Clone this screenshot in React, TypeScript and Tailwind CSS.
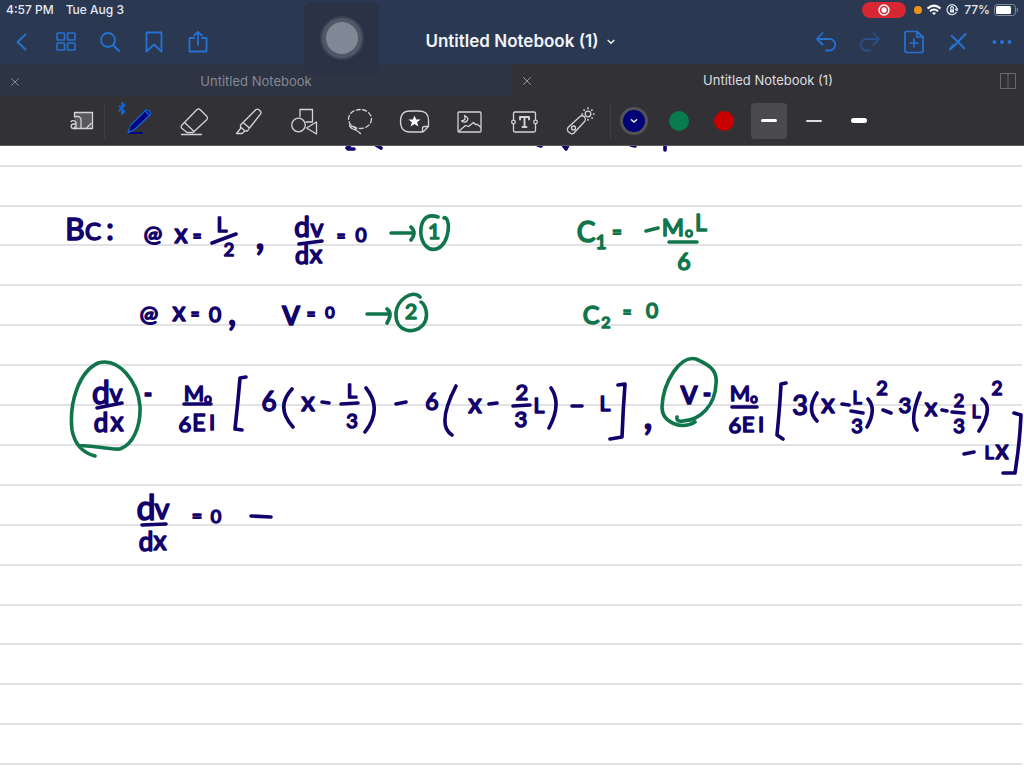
import type { ReactNode } from "react";

type IconProps = { children: ReactNode; className?: string };

function Icon({ children, className = "h-6 w-6" }: IconProps) {
  return (
    <svg
      className={className}
      viewBox="0 0 24 24"
      fill="none"
      stroke="currentColor"
      strokeWidth={1.6}
      strokeLinecap="round"
      strokeLinejoin="round"
      aria-hidden="true"
    >
      {children}
    </svg>
  );
}

const leftActions = [
  { label: "Back", icon: <path d="M15.5 4.5 7.5 12l8 7.5" strokeWidth={1.9} /> },
  {
    label: "Thumbnails",
    icon: (
      <>
        <rect x="3" y="3" width="7.5" height="7" rx=".8" />
        <rect x="13.5" y="3" width="7.5" height="7" rx=".8" />
        <rect x="3" y="13" width="7.5" height="7" rx=".8" />
        <rect x="13.5" y="13" width="7.5" height="7" rx=".8" />
      </>
    ),
  },
  {
    label: "Search",
    icon: (
      <>
        <circle cx="10" cy="10" r="7" strokeWidth={1.8} />
        <path d="m15.2 15.2 5.8 5.8" strokeWidth={2.2} />
      </>
    ),
  },
  { label: "Bookmark", icon: <path d="M4.5 2.5h15v19L12 14.5l-7.5 7z" strokeWidth={1.8} /> },
  {
    label: "Share",
    icon: <path d="M8 8H3.5v13.5h17V8H16M12 15V2M8 5.5 12 2l4 3.5" strokeWidth={1.8} />,
  },
];

const rightActions = [
  {
    label: "Undo",
    tone: "text-[#2572d2]",
    icon: <path d="m8.5 3-5.5 6 5.5 5.5M3 9h12.5a5.5 5.5 0 0 1 0 11.500H12" strokeWidth={1.8} />,
  },
  {
    label: "Redo",
    tone: "text-[#28518b]",
    icon: <path d="m15.5 3 5.5 6-5.5 5.5M21 9H8.5a5.5 5.5 0 0 0 0 11.500H12" strokeWidth={1.8} />,
  },
  {
    label: "Add page",
    tone: "text-[#2572d2]",
    icon: <path d="M4 1.500h11l6 5.500v13.500q0 2-2 2H5q-2 0-2-2v-17q0-2 1-2M15 1.500V7h6M12 9v8M8 13h8" strokeWidth={1.7} />,
  },
  {
    label: "Close editing",
    tone: "text-[#2572d2]",
    icon: (
      <>
        <path d="m19.500 4-11 11.500L4 19.500l3-4.500" strokeWidth={2} />
        <path d="m5.500 5.500 13 13" strokeWidth={1.8} />
      </>
    ),
  },
  {
    label: "More",
    tone: "text-[#2572d2]",
    icon: (
      <g fill="currentColor" stroke="none">
        <circle cx="4.5" cy="12" r="2" />
        <circle cx="12" cy="12" r="2" />
        <circle cx="19.5" cy="12" r="2" />
      </g>
    ),
  },
];

const tools = [
  {
    label: "Zoom window",
    icon: (
      <>
        <path d="M7.500 10V5.500h18v16h-18V20" fill="#59595c" />
        <path d="M4 14.500a3 3 0 0 1 5 1v6M9 17H6.500a2 2 0 0 0 0 4.500H9M8 9.500h2.500a3.500 3.500 0 0 1 3.500 3.500v8.500M20 20.500l4-4" />
      </>
    ),
  },
  {
    label: "Pen",
    icon: (
      <>
        <path d="M4 26h13" stroke="#000080" strokeWidth={1.8} />
        <path d="m3 26 3-8L20.500 3.500q1.500-1.200 3 0l1.500 1.500q1.200 1.500 0 3L10 22z" fill="#000080" stroke="#1265cf" />
        <path d="M7 20.500 22 6" stroke="#000080" strokeWidth={3.5} />
        <path d="m20 4 4.500 4.500" stroke="#1265cf" />
        <path d="m-5.500-.500 5 5-2.500 2.500V-4l2.500 2.500-5 5" stroke="#1265cf" strokeWidth={1.8} />
      </>
    ),
  },
  {
    label: "Eraser",
    icon: (
      <>
        <path d="m1.500 18.500 15.500-16q1.500-1 3 0l7 7q1 1.500 0 3L13 25.500H7l-5.500-4.500q-.8-1.200 0-2.500Z" />
        <path d="m4.500 15.500 9.500 9M1.500 27.500h20" />
      </>
    ),
  },
  {
    label: "Highlighter",
    icon: (
      <path d="m8 15.500 13-13q1.500-1 3 .2l1.500 1.500q1 1.500 0 3L14.500 21zM8 15.500 5.500 18v3.500l-4 5h5.500l3-2.500h2.500l2-3M5.500 20l4.500 4" />
    ),
  },
  {
    label: "Shapes",
    icon: (
      <>
        <path d="M10 9.500V2.500h12.500v12.500H16" />
        <circle cx="8.500" cy="18" r="6.800" />
        <path d="m16.500 21 10-6v12z" />
      </>
    ),
  },
  {
    label: "Lasso",
    icon: (
      <>
        <ellipse cx="15" cy="12" rx="11.500" ry="9.500" strokeDasharray="4 2.500" />
        <path d="M4.500 18c0 5 6 3 11 8.500M6 19.500q4-1 5 3" />
      </>
    ),
  },
  {
    label: "Elements",
    icon: (
      <>
        <path d="M28.500 18.500V13.500q0-9.500-9.500-9.500h-9Q.5 4 .5 14.500T10 25h12q1 0 2-1l3.500-3.500q1-1 1-2M22.500 25v-3.500q0-2 2-2h4" />
        <path d="m14.500 8.500 1.700 4h4.300l-3.400 2.700 1.300 4.300-3.900-2.500-3.900 2.500 1.300-4.300-3.400-2.700h4.300z" fill="white" stroke="none" />
      </>
    ),
  },
  {
    label: "Image",
    icon: (
      <>
        <rect x="3" y="5" width="23" height="20" rx="1" />
        <path d="M9.500 8.500q2 5-3 5.500 3 2.500 6-.5 1.500-3-3-5ZM3.500 24.500l7-6 3 1 5-4 2 2h2l3 2.500" />
      </>
    ),
  },
  {
    label: "Text box",
    icon: (
      <>
        <path d="M3.500 12.500V6.500Q3.500 5 5 5h19q1.500 0 1.500 1.500v6M25.500 17v6.500q0 1.500-1.500 1.500H5q-1.500 0-1.500-1.500V17" />
        <circle cx="3.500" cy="15" r="1.800" />
        <circle cx="25.500" cy="15" r="1.800" />
        <path d="M10 12.500V10h9v2.500M14.500 10v10M12.500 20h4" strokeWidth={1.9} />
      </>
    ),
  },
  {
    label: "Laser pointer",
    icon: (
      <>
        <path d="m3 20.500 12-11q2-1.500 4 0l.8.8q1.500 2 0 4L9 26q-2 1.500-4 0l-2-1.500q-1.500-2 0-4Z" />
        <circle cx="8.500" cy="21" r="2" />
        <circle cx="23" cy="7" r="2.800" />
        <path d="M23 1v.4M23 12.500v.5M17 7h.4M28.600 7h.4M19 3l.2.200M27 11l.2.200M27 3l-.2.200" strokeWidth={1.7} />
      </>
    ),
  },
];

const navy = "#12006b";
const green = "#11754b";

// character, centre x, baseline, size
type Mark = [string, number, number, number];

const navyMarks: Mark[] = [
  ["B", 75, 240, 30], ["C", 93, 240, 24], [":", 110, 240, 30],
  ["@", 153, 242, 22], ["x", 181, 243, 26], ["=", 197, 242, 15],
  ["L", 222, 232, 21], ["2", 229, 256, 18], [",", 260, 249, 42],
  ["d", 302, 237, 28], ["v", 317, 237, 25], ["d", 302, 264, 25], ["x", 316, 263, 25],
  ["=", 341, 242, 15], ["0", 361, 242, 19],
  ["@", 149, 322, 22], ["x", 179, 321, 26], ["=", 195, 320, 15], ["0", 215, 322, 21],
  [",", 232, 325, 38], ["v", 291, 325, 36], ["=", 311, 320, 15], ["0", 330, 318, 16],
  ["d", 101, 404, 32], ["v", 116, 402, 25], ["d", 101, 432, 26], ["x", 117, 431, 26],
  ["=", 148, 399, 13], ["M", 194, 401, 22], ["o", 208, 403, 13],
  ["6", 185, 432, 22], ["E", 199, 431, 23], ["I", 212, 430, 22],
  ["6", 269, 411, 26], ["x", 308, 411, 27], ["L", 352, 398, 20], ["3", 352, 428, 20],
  ["6", 432, 410, 23], ["x", 475, 413, 27], ["2", 522, 400, 22], ["3", 521, 427, 22],
  ["L", 539, 413, 21], ["L", 605, 411, 21], [",", 648, 429, 42],
  ["v", 689, 404, 34], ["=", 707, 399, 13],
  ["M", 740, 401, 22], ["o", 754, 403, 13],
  ["6", 735, 433, 22], ["E", 748, 432, 22], ["I", 761, 432, 22],
  ["3", 800, 415, 27], ["x", 828, 413, 27], ["L", 857, 404, 18], ["3", 857, 433, 20],
  ["2", 882, 395, 20], ["3", 905, 413, 22], ["x", 931, 416, 25],
  ["2", 959, 407, 18], ["3", 959, 433, 20], ["L", 976, 418, 17], ["2", 997, 395, 19],
  ["L", 989, 459, 18], ["x", 1002, 459, 26],
  ["d", 146, 520, 34], ["v", 162, 519, 29], ["d", 146, 551, 26], ["x", 160, 550, 26],
  ["=", 197, 522, 18], ["0", 216, 523, 18],
];

const greenMarks: Mark[] = [
  ["1", 434, 239, 21], ["C", 586, 242, 28], ["1", 601, 249, 19], ["=", 617, 238, 17],
  ["M", 673, 236, 24], ["o", 689, 237, 14], ["L", 701, 231, 23], ["6", 684, 270, 23],
  ["2", 411, 319, 21], ["C", 591, 324, 25], ["2", 606, 328, 16], ["=", 627, 318, 15],
  ["0", 652, 318, 21],
];

// fraction bars, minus signs, brackets
const navyStrokes = [
  "M212 243 236 234", "M299 244 322 241", "M97 408 122 403", "M184 404H211",
  "M246 377 240 378Q238 402 235 429L242 430", "M292 389Q275 407 293 427",
  "M322 402 329 403", "M341 404 358 403", "M366 388Q383 409 365 432",
  "M396 404 406 402", "M456 386Q436 425 452 435", "M489 404 497 403",
  "M513 406 530 405", "M551 388Q562 404 549 428", "M572 406H582",
  "M618 385 625 384Q623 410 622 437L610 439", "M732 407H757",
  "M786 383 781 384Q780 405 777 435L783 439", "M817 393Q806 410 817 421",
  "M842 404 849 405", "M851 411 863 413", "M868 399Q877 409 867 427",
  "M883 410 891 413", "M920 393Q909 420 917 430", "M942 410 947 411",
  "M952 412 964 413", "M982 399Q994 408 979 431", "M964 454 974 452",
  "M1014 413 1021 415Q1020 441 1015 473L1003 473", "M142 525 166 524",
  "M251 516 271 517",
  "M347 148 350 145M348 149H354M376 145 381 148M538 145 541 146M563 145 566 149 568 145M631 145 635 146M665 144V150",
];

const greenStrokes = [
  "M391 233H414M411 227Q417 233 411 240",
  "M438 217C424 212 420 224 421 235 424 254 442 254 447 236 451 221 445 216 444 218",
  "M367 314H390M387 309Q393 313 387 323",
  "M420 297C412 289 397 300 396 313 395 332 414 335 423 325 431 314 423 302 421 302",
  "M646 231 658 228", "M669 242H697",
  "M95 456C80 452 74 441 72 430 69 402 79 372 98 363 119 357 138 382 140 406 141 428 132 445 120 449 107 450 90 444 79 446",
  "M695 422C682 430 662 423 662 407 663 382 680 355 696 359 707 364 718 369 716 384 715 405 701 420 683 421Q676 422 677 417",
];

const rulings = Array.from({ length: 16 }, (_, i) => Math.round(165.6 + i * 39.9));

function Handwriting({ marks, strokes, color }: { marks: Mark[]; strokes: string[]; color: string }) {
  return (
    <g strokeLinecap="round" strokeLinejoin="round">
      <path d={strokes.join("")} fill="none" stroke={color} strokeWidth={3.6} />
      <g fill={color} stroke={color} strokeWidth={1.6} textAnchor="middle" className="font-['Lato'] font-normal">
        {marks.map(([char, x, y, size]) => (
          <text key={`${x}-${y}`} x={x} y={y} fontSize={size}>
            {char}
          </text>
        ))}
      </g>
    </g>
  );
}

function StatusBar() {
  return (
    <div className="flex h-5 items-center justify-between pl-1.5 pr-1.5 text-xs font-medium text-[#e5eaf2]">
      <div className="flex gap-3">
        <span>4:57 PM</span>
        <span>Tue Aug 3</span>
      </div>
      <div className="flex items-center">
        <span className="mr-2 flex h-4 w-11 items-center justify-center rounded-full bg-[#d62733]">
          <svg className="h-3 w-3" viewBox="0 0 12 12" fill="none" stroke="white" strokeWidth="1.4">
            <circle cx="6" cy="6" r="5" />
            <circle cx="6" cy="6" r="2" fill="white" />
          </svg>
        </span>
        <span className="mr-1 h-2 w-2 rounded-full bg-[#ee9418]" />
        <svg className="mr-1 h-3 w-4" viewBox="0 0 16 12" fill="none" stroke="white" strokeWidth="2">
          <path d="M1.5 4.5Q8-1.300 14.500 4.500M4 7.200q4-3.500 8 0" />
          <path d="m8 11-2-2q2-1.700 4 0z" fill="white" stroke="none" />
        </svg>
        <svg className="mr-1.5 h-3 w-3" viewBox="0 0 12 12" fill="none" stroke="#e5eaf2" strokeWidth="1.2">
          <path d="M10.500 8A5 5 0 1 1 11 5m-2 0 2 1.500L12 4.500M4.700 5.500V4a1.300 1.300 0 0 1 2.600 0v1.500" />
          <rect x="4" y="5.500" width="4" height="3" fill="#e5eaf2" stroke="none" />
        </svg>
        <span className="mr-1">77%</span>
        <svg className="h-3 w-6" viewBox="0 0 24 12" fill="none">
          <rect x=".5" y=".5" width="21" height="11" rx="3" stroke="#808b9e" />
          <rect x="2" y="2" width="15" height="8" rx="1.5" fill="white" />
          <path d="M23 4q1 2 0 4" stroke="#808b9e" />
        </svg>
      </div>
    </div>
  );
}

export default function App() {
  return (
    <div className="min-h-screen overflow-hidden bg-white font-['Inter',sans-serif]">
      <header className="relative bg-[#2b3852]">
        <StatusBar />

        <nav className="relative flex h-11 items-center justify-between">
          <div className="flex text-[#2572d2]">
            {leftActions.map(({ label, icon }) => (
              <button key={label} type="button" aria-label={label} className="flex h-11 w-11 items-center justify-center">
                <Icon>{icon}</Icon>
              </button>
            ))}
          </div>
          <button type="button" className="flex items-center gap-2 pl-4 text-[17px] font-semibold text-[#f1f4f9]">
            Untitled Notebook (1)
            <Icon className="h-2 w-2">
              <path d="m3 7 9 9 9-9" strokeWidth={4} />
            </Icon>
          </button>
          <div className="flex">
            {rightActions.map(({ label, tone, icon }) => (
              <button key={label} type="button" aria-label={label} className={`flex h-11 w-11 items-center justify-center ${tone}`}>
                <Icon>{icon}</Icon>
              </button>
            ))}
          </div>
        </nav>

        <div className="flex h-8 pt-0.5 text-[13px]">
          <div className="-mt-0.5 flex flex-1 items-center bg-[#2d3443] pt-1 text-[#858994]">
            <button type="button" aria-label="Close Untitled Notebook" className="flex w-8 justify-center pr-0.5">
              <Icon className="h-3 w-3">
                <path d="m5 5 14 14M19 5 5 19" strokeWidth={2} />
              </Icon>
            </button>
            <button type="button" className="flex-1 pr-8">Untitled Notebook</button>
          </div>
          <div className="-mt-0.5 flex flex-1 items-center bg-[#323135] pt-0.5 text-[#dedee1]">
            <button type="button" aria-label="Close Untitled Notebook (1)" className="flex w-8 justify-center pr-0.5 text-[#97979c]">
              <Icon className="h-3 w-3">
                <path d="m5 5 14 14M19 5 5 19" strokeWidth={2} />
              </Icon>
            </button>
            <button type="button" className="flex-1">Untitled Notebook (1)</button>
            <button type="button" aria-label="Split view" className="flex w-8 justify-center text-[#69696d]">
              <svg className="h-4 w-4" viewBox="0 0 16 16" fill="none" stroke="currentColor">
                <path d="M.5.500h15v15H.5zM8 .5v15" />
              </svg>
            </button>
          </div>
        </div>

        {/* touch indicator */}
        <div className="pointer-events-none absolute left-[304px] top-0.5 flex h-[72px] w-[75px] items-center justify-center rounded-lg bg-[#2a3244]/90">
          <div className="flex h-11 w-11 items-center justify-center rounded-full bg-[#3b4354]">
            <div className="flex h-10 w-10 items-center justify-center rounded-full bg-[#505868]">
              <div className="h-8 w-8 rounded-full bg-[#808795]" />
            </div>
          </div>
        </div>
      </header>

      <div className="flex h-[50px] items-center border-b border-[#5b5a5e] bg-[#323135] pl-[58px] text-[#d3d3d5]">
        {tools.map(({ label, icon }) => (
          <button
            key={label}
            type="button"
            aria-label={label}
            className="flex h-9 w-[55px] items-center justify-center first:mr-1.5 first:w-[47px] first:border-r first:border-[#403f43]"
          >
            <svg
              className="h-7 w-7 overflow-visible"
              viewBox="0 0 28 28"
              fill="none"
              stroke="currentColor"
              strokeWidth={1.3}
              strokeLinecap="round"
              strokeLinejoin="round"
            >
              {icon}
            </svg>
          </button>
        ))}
        <div className="ml-1 flex items-center border-l border-[#403f43]">
          <button type="button" aria-label="Navy ink" className="flex w-[45px] justify-center">
            <span className="flex h-7 w-7 items-center justify-center rounded-full border-3 border-[#535257] bg-[#000078] text-white">
              <Icon className="h-2 w-2">
                <path d="m4 8 8 7 8-7" strokeWidth={4} />
              </Icon>
            </span>
          </button>
          <button type="button" aria-label="Green ink" className="flex w-[45px] justify-center">
            <span className="h-5 w-5 rounded-full bg-[#087c4d]" />
          </button>
          <button type="button" aria-label="Red ink" className="flex w-[45px] justify-center">
            <span className="h-5 w-5 rounded-full bg-[#c90000]" />
          </button>
          <button type="button" aria-label="Medium stroke" className="flex w-[45px] justify-center">
            <span className="flex h-9 w-9 items-center justify-center rounded-sm bg-[#4b4a4f]">
              <span className="h-[3px] w-4 rounded-full bg-white" />
            </span>
          </button>
          <button type="button" aria-label="Thin stroke" className="flex w-[45px] justify-center">
            <span className="h-0.5 w-4 rounded-full bg-[#dededf]" />
          </button>
          <button type="button" aria-label="Thick stroke" className="flex w-[45px] justify-center">
            <span className="h-[5px] w-4 rounded-full bg-white" />
          </button>
        </div>
      </div>

      <main>
        <svg className="block w-full" viewBox="0 146 1024 622" aria-label="Notebook page">
          <path d={rulings.map((y) => `M0 ${y}H1022`).join("")} stroke="#d9d9db" strokeWidth={1.5} />
          <Handwriting marks={navyMarks} strokes={navyStrokes} color={navy} />
          <Handwriting marks={greenMarks} strokes={greenStrokes} color={green} />
        </svg>
      </main>
    </div>
  );
}
